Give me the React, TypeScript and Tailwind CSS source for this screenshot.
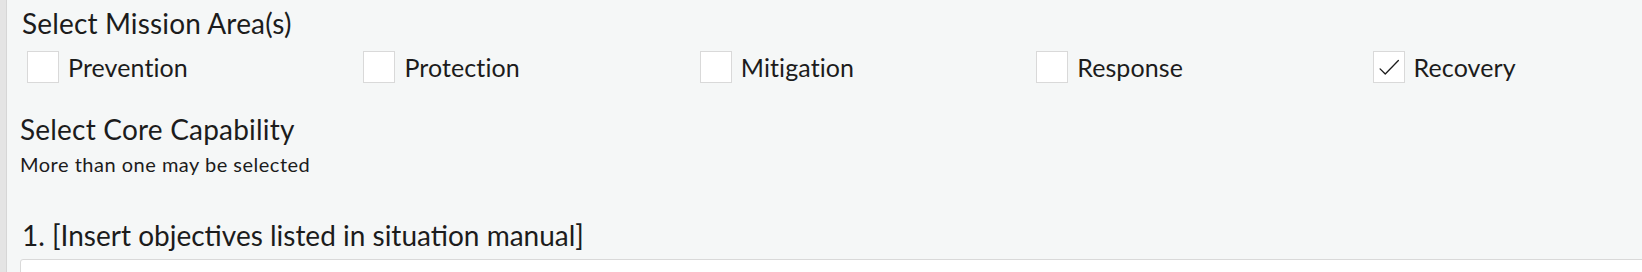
import { useState } from 'react'

const areas = ['Prevention', 'Protection', 'Mitigation', 'Response', 'Recovery']

function Box({ checked }: { checked: boolean }) {
  return (
    <span className="w-8 h-8 flex-shrink-0 bg-white border border-[#d9d9d9] flex items-center justify-center">
      {checked && (
        <svg width="32" height="32" viewBox="0 0 32 32" fill="none">
          <polyline
            points="6.5,18 12,23.5 26,9"
            stroke="#1c1c1c"
            strokeWidth="1.4"
            strokeLinecap="round"
            strokeLinejoin="round"
          />
        </svg>
      )}
    </span>
  )
}

export default function App() {
  const [selected, setSelected] = useState<string[]>(['Recovery'])

  const toggle = (a: string) =>
    setSelected((s) => (s.includes(a) ? s.filter((x) => x !== a) : [...s, a]))

  return (
    <div className="w-[1642px] h-[272px] overflow-hidden flex bg-[#f5f7f7] text-[#1c1c1c] font-['Lato',sans-serif]">
      <div className="w-[7px] flex-shrink-0 bg-[#e4e4e4] border-r border-[#d6d6d6]" />
      <div className="w-[1695px] flex-shrink-0 pl-[13px] pt-[6px]">
        <h2 className="text-[28px] leading-[34px] pl-[2px] tracking-[0.15px]">Select Mission Area(s)</h2>

        <div className="mt-[11px] grid grid-cols-5">
          {areas.map((a) => (
            <label
              key={a}
              onClick={() => toggle(a)}
              className="flex items-center gap-[9px] pl-[7px] cursor-pointer"
            >
              <Box checked={selected.includes(a)} />
              <span className="text-[25px] leading-[32px] tracking-[0.1px]">{a}</span>
            </label>
          ))}
        </div>

        <h2 className="mt-[29px] text-[28px] leading-[34px] tracking-[0.2px]">Select Core Capability</h2>
        <p className="mt-[6px] text-[20px] leading-[24px] tracking-[0.5px]">More than one may be selected</p>

        <h3 className="mt-[42px] text-[28px] leading-[34px] pl-[2px]">
          1. [Insert objectives listed in situation manual]
        </h3>
        <div className="mt-[7px] h-[48px] bg-white border border-[#d9d9d9] rounded-[3px]" />
      </div>
    </div>
  )
}
